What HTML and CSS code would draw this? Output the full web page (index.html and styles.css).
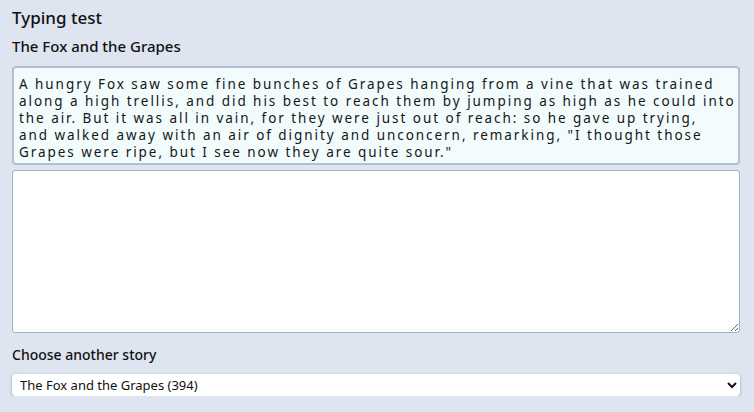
FILE: index.html
```html
<!DOCTYPE html>
<html lang="en">
<head>
<meta charset="utf-8">
<title>Typing test</title>
<link rel="stylesheet" href="styles.css">
</head>
<body>
<main class="page">
  <h1 class="title">Typing test</h1>
  <h2 class="story-title">The Fox and the Grapes</h2>
  <div class="story">A hungry Fox saw some fine bunches of Grapes hanging from a vine that was trained<br>along a high trellis, and did his best to reach them by jumping as high as he could into<br>the air. But it was all in vain, for they were just out of reach: so he gave up trying,<br>and walked away with an air of dignity and unconcern, remarking, "I thought those<br>Grapes were ripe, but I see now they are quite sour."</div>
  <textarea class="input"></textarea>
  <label class="choose" for="story-select">Choose another story</label>
  <select class="select" id="story-select">
    <option>The Fox and the Grapes (394)</option>
  </select>
</main>
</body>
</html>
```
FILE: styles.css
```css
html, body {
  margin: 0;
  padding: 0;
  background: #dee4f0;
}
body {
  font-family: "Noto Sans", "Open Sans", sans-serif;
  color: #111;
}
.page {
  display: flex;
  flex-direction: column;
  padding: 6px 14px 0 12px;
}
.title {
  margin: 0;
  font-size: 17px;
  font-weight: 500;
  line-height: 24px;
}
.story-title {
  margin: 5px 0 0 0;
  font-size: 15px;
  font-weight: 500;
  line-height: 22px;
}
.story {
  margin-top: 9px;
  background: #f2fcfc;
  border: 2px solid #b3bfcf;
  border-radius: 4px;
  padding: 8px 6px 2px 5px;
  font-size: 13.5px;
  line-height: 17px;
  letter-spacing: 1.95px;
  white-space: nowrap;
  overflow: hidden;
  color: #161616;
}
.input {
  margin-top: 5px;
  height: 163px;
  box-sizing: border-box;
  border: 1px solid #a6b0bf;
  border-radius: 3px;
  background: #fff;
  resize: vertical;
  width: 100%;
  margin-right: -1px;
}
.choose {
  margin-top: 12px;
  font-size: 14px;
  font-weight: 500;
  line-height: 20px;
}
.select {
  margin-top: 9px;
  height: 22px;
  border: none;
  border-radius: 4px;
  background: #fff;
  box-shadow: 0 1px 3px rgba(60, 70, 90, 0.45);
  font-family: "Noto Sans", sans-serif;
  font-size: 13px;
  padding: 0 4px;
  color: #111;
}
```
